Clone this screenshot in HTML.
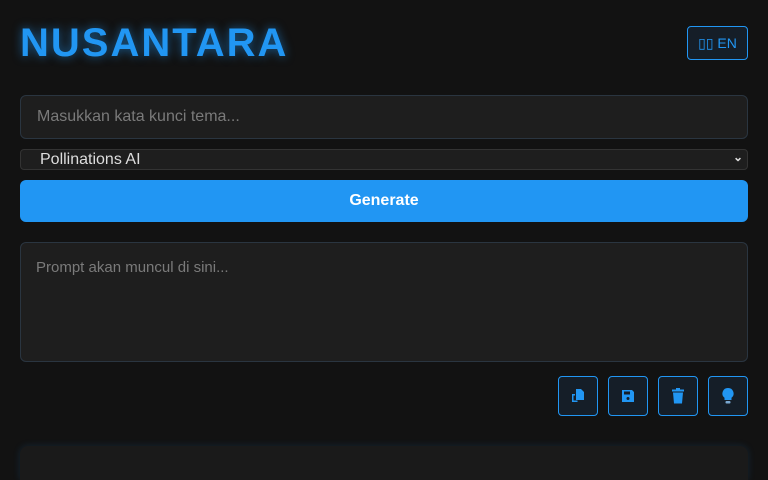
<!DOCTYPE html>
<html><head><meta charset="utf-8"><style>
html,body{margin:0;overflow:hidden}
body{background:#121212;font-family:"Liberation Sans",Arial,Helvetica,sans-serif;width:768px;height:480px;position:relative}
.t{position:absolute;left:20px;top:20px;font-size:40px;font-weight:bold;color:#2196f3;letter-spacing:2px;text-shadow:0 0 10px rgba(33,150,243,.6);line-height:46px}
.en{position:absolute;left:687px;top:26px;width:59px;height:32px;border:1px solid #2196f3;border-radius:4px;background:#151e28;color:#2196f3;font-size:14px;line-height:32px;text-align:center}
.in{position:absolute;left:20px;top:95px;width:726px;height:42px;border:1px solid #2a3540;border-radius:6px;background:#1e1e1e;color:#7a7a7a;font-size:16px;line-height:42px}
.in span{margin-left:16px}
.sel{position:absolute;left:20px;top:149px;width:726px;height:19px;border:1px solid #333;border-radius:4px;background:#1e1e1e;color:#ddd;font-size:16px;line-height:19px}
.gen{position:absolute;left:20px;top:180px;width:728px;height:42px;background:#2196f3;border-radius:6px;color:#fff;font-weight:bold;font-size:16px;line-height:42px;text-align:center}
.ta{position:absolute;left:20px;top:242px;width:726px;height:118px;border:1px solid #2a3540;border-radius:6px;background:#1e1e1e;color:#7a7a7a;font-size:15px}
.b{position:absolute;top:376px;width:38px;height:38px;border:1px solid #2196f3;border-radius:4px;background:#151e28;display:flex;align-items:center;justify-content:center}
.card{position:absolute;left:20px;top:446px;width:728px;height:34px;background:#1a1a1a;border-radius:8px 8px 0 0;box-shadow:0 0 8px rgba(33,150,243,.15)}
</style></head><body>
<div class="t">NUSANTARA</div>
<div class="en">▯▯ EN</div>
<div class="in"><span>Masukkan kata kunci tema...</span></div>
<div class="sel"><span style="margin-left:19px">Pollinations AI</span><span style="position:absolute;right:4px;top:-2px;font-size:12px;font-weight:bold">⌄</span></div>
<div class="gen">Generate</div>
<div class="ta"><div style="margin:16px 0 0 15px">Prompt akan muncul di sini...</div></div>
<div class="b" style="left:558px"><svg width="16" height="16" viewBox="0 0 16 16" fill="#2196f3"><path d="M6 1h5l3 3v8H6z"/><path d="M2 6h3v1.5H3.5v5h4V14H2z"/></svg></div>
<div class="b" style="left:608px"><svg width="14" height="14" viewBox="0 0 14 14" fill="#2196f3"><path d="M1 1h10l2 2v10H1z"/><rect x="3" y="2.5" width="6" height="3" fill="#151e28"/><circle cx="7" cy="9.5" r="1.5" fill="#151e28"/></svg></div>
<div class="b" style="left:658px"><svg width="14" height="16" viewBox="0 0 14 16" fill="#2196f3"><rect x="1" y="1.5" width="12" height="2"/><rect x="5" y="0" width="4" height="2"/><path d="M2 4.5h10l-1 11H3z"/></svg></div>
<div class="b" style="left:708px"><svg width="12" height="16" viewBox="0 0 12 16" fill="#2196f3"><path d="M6 0a5.5 5.5 0 0 0-3.5 9.8V12h7V9.8A5.5 5.5 0 0 0 6 0z"/><rect x="3.5" y="13" width="5" height="2.5" rx="1" fill="#7aa8d0"/></svg></div>
<div class="card"></div>
</body></html>
